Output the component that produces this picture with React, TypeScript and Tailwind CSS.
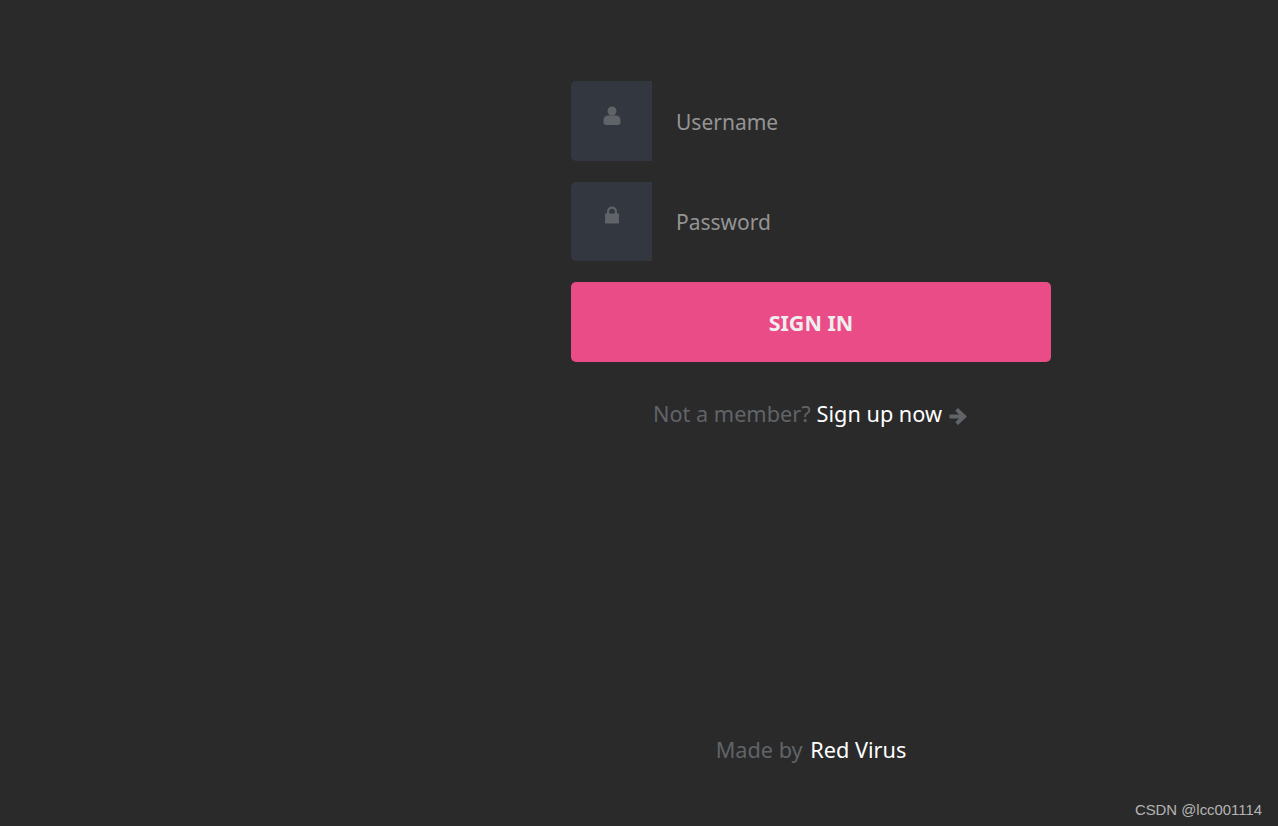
import React from 'react';

function UserIcon() {
  return (
    <svg width="18" height="20" viewBox="0 0 18 20" className="fill-[#606468]">
      <circle cx="9" cy="5" r="4.500" />
      <path d="M.5 14.500c0-3.200 2-5 4.500-5h8c2.500 0 4.500 1.800 4.500 5v2c0 1.400-1 2.500-2.500 2.500H3c-1.500 0-2.500-1.100-2.500-2.500z" />
    </svg>
  );
}

function LockIcon() {
  return (
    <svg width="14" height="18" viewBox="0 0 14 18" className="fill-[#606468]">
      <path fillRule="evenodd" d="M2 7.500V5.500a5 5 0 0 1 10 0v2h1.200a.8.8 0 0 1 .8.800v8.400a.8.800 0 0 1-.8.800H.8a.8.8 0 0 1-.8-.8V8.300a.8.800 0 0 1 .8-.8zm2.200 0h5.600v-2a2.800 2.800 0 0 0-5.600 0z" />
    </svg>
  );
}

export default function App() {
  return (
    <div className="relative h-[826px] overflow-hidden bg-[#2a2a2a] font-['Noto_Sans',sans-serif]">
      <main className="ml-[571px] flex h-full w-[480px] flex-col pt-[81px]">
        <div className="mb-[21px] flex h-[80px]">
          <span className="flex w-[81px] justify-center rounded-l-[5px] bg-[#33373f] pt-[25px]">
            <UserIcon />
          </span>
          <span className="pl-[24px] pt-[25px] text-[21px] leading-[32px] text-[#949494]">Username</span>
        </div>
        <div className="mb-[21px] flex h-[79px]">
          <span className="flex w-[81px] justify-center rounded-l-[5px] bg-[#33373f] pt-[24px]">
            <LockIcon />
          </span>
          <span className="pl-[24px] pt-[24px] text-[21px] leading-[32px] text-[#949494]">Password</span>
        </div>
        <button className="h-[80px] rounded-[5px] bg-[#ea4c88] pt-[3px] text-[21.500px] font-bold text-[#eeeeee]">SIGN IN</button>
        <p className="mt-[36px] flex items-center justify-center text-[21.700px] leading-[32px] text-[#606468]">
          Not a member?<span className="ml-[6px] text-white">Sign up now</span>
          <svg width="20" height="19" viewBox="0 0 20 19" className="ml-[7px] mt-[5px] fill-[#606468]">
            <path d="M.5 7.500h9.500L6.300 3.700 9 1l9 8.500L9 18l-2.700-2.700L10 11.500H.5z" />
          </svg>
        </p>
        <p className="mt-[304px] text-center text-[21.700px] leading-[32px] text-[#606468]">
          Made by <span className="ml-[2px] text-white">Red Virus</span>
        </p>
      </main>
      <span className="absolute bottom-[7px] right-[16px] font-['Liberation_Sans',sans-serif] text-[14.900px] leading-[18px] text-[#b4b4b4]">
        CSDN @lcc001114
      </span>
    </div>
  );
}
